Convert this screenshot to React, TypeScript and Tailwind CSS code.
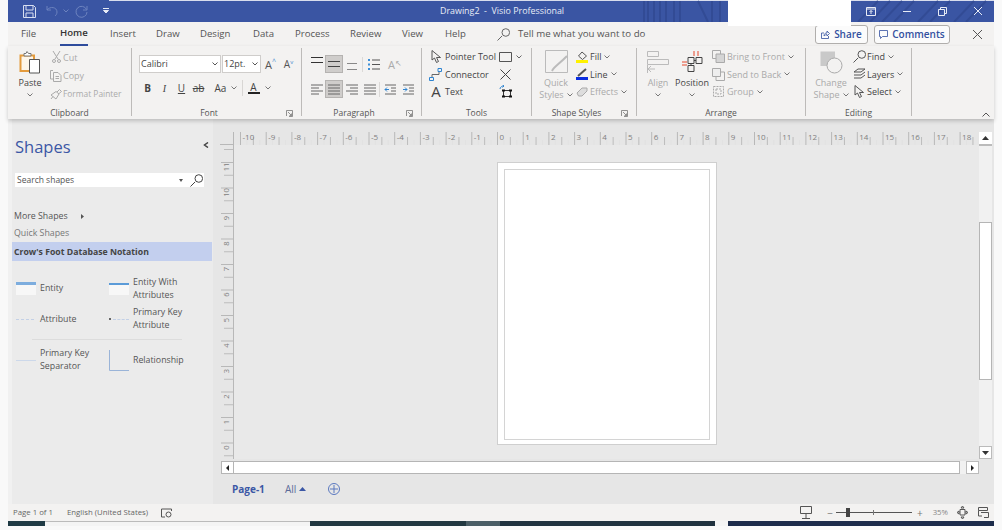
import React from "react";

type IP = { w: number; h: number; className?: string; children?: React.ReactNode };
const Ic = ({ w, h, className, children }: IP) => (
  <svg width={w} height={h} viewBox={`0 0 ${w} ${h}`} fill="none" stroke="currentColor" strokeWidth={1} className={"shrink-0 " + (className ?? "")}>
    {children}
  </svg>
);
const Chev = ({ className }: { className?: string }) => (
  <Ic w={6} h={4} className={className}>
    <path d="M.5.5 3 3 5.5.5" />
  </Ic>
);

const Group = ({ className, label, launcher, children }: { className: string; label: string; launcher?: boolean; children: React.ReactNode }) => (
  <div className={"h-[68px] shrink-0 border-r border-[#bdbbb9] flex flex-col " + className}>
    <div className="h-[58px] shrink-0 flex">{children}</div>
    <div className="h-[14px] shrink-0 flex items-center text-[8.5px] text-[#555]">
      <div className="flex-1 text-center">{label}</div>
      {launcher ? (
        <div className="w-[15px] flex justify-start text-[#777]">
          <Ic w={7} h={7}>
            <path d="M.5 6V.5H6.500V6.500H3M2 2 5.500 5.500M5.500 3.500V5.500H3.500" strokeWidth={0.8} />
          </Ic>
        </div>
      ) : null}
    </div>
  </div>
);

const Big = ({ className, icon, l1, l2, chev, dim }: { className: string; icon: React.ReactNode; l1: string; l2?: string; chev?: boolean; dim?: boolean }) => (
  <div className={"flex flex-col items-center shrink-0 text-[9px] " + className + (dim ? " text-[#aaa]" : " text-[#444]")}>
    <div className="h-[26px] mt-[2px] flex items-start justify-center">{icon}</div>
    <div className="h-[12.5px] flex items-center leading-none">{l1}</div>
    <div className="h-[12.5px] flex items-center gap-[3px] leading-none">
      {l2 ? <span>{l2}</span> : null}
      {chev ? <Chev className="text-[#777]" /> : null}
    </div>
  </div>
);

const Row = ({ icon, text, chev, dim, h, iw, gap }: { icon: React.ReactNode; text: string; chev?: boolean; dim?: boolean; h: string; iw: string; gap: string }) => (
  <div className={"flex items-center text-[9px] whitespace-nowrap " + h + (dim ? " text-[#aaa]" : " text-[#444]")}>
    <div className={"flex justify-center shrink-0 " + iw}>{icon}</div>
    <span className={gap}>{text}</span>
    {chev ? <Chev className="ml-[3px] text-[#777]" /> : null}
  </div>
);

const Cell = ({ className, on, children }: { className: string; on?: boolean; children: React.ReactNode }) => (
  <div className={"h-[18px] flex items-center justify-center shrink-0 " + className + (on ? " bg-[#cfcdcb] border border-[#b5b3b1]" : "")}>{children}</div>
);

const Lines = ({ kind }: { kind: "l" | "c" | "r" | "j" }) => {
  const d =
    kind === "l"
      ? "M1 2H13M1 5H9M1 8H13M1 11H9"
      : kind === "c"
      ? "M1 2H13M3 5H11M1 8H13M3 11H11"
      : kind === "r"
      ? "M1 2H13M5 5H13M1 8H13M5 11H13"
      : "M1 2H13M1 5H13M1 8H13M1 11H13";
  return (
    <Ic w={14} h={13} className="text-[#666]">
      <path d={d} />
    </Ic>
  );
};

const Ruler = () => {
  const U = 25.7;
  const nums = Array.from({ length: 29 }, (_, i) => i - 10);
  return (
    <svg width={745} height={13} className="block">
      {nums.map((n) => {
        const x = 263.5 + n * U;
        return (
          <g key={n}>
            <path d={`M${x} 0V13`} stroke="#b8b8b8" />
            <path d={`M${x + U / 2} 5V13`} stroke="#bcbcbc" />
            <path d={`M${x + U / 4} 8V13M${x + (3 * U) / 4} 8V13`} stroke="#e2e2e2" />
            <text x={x + 2} y={8} fontSize={8} fill="#808080" fontFamily="Open Sans, sans-serif">
              {n}
            </text>
          </g>
        );
      })}
    </svg>
  );
};

const VRuler = () => {
  const U = 25.5;
  const nums = Array.from({ length: 12 }, (_, i) => i);
  return (
    <svg width={14} height={314} className="block">
      <path d="M13.5 0V314" stroke="#b8b8b8" />
      <path d="M4 4.500H13" stroke="#bcbcbc" />
      {nums.map((n) => {
        const y = 298 - n * U;
        return (
          <g key={n}>
            <path d={`M1 ${y}H13`} stroke="#b8b8b8" />
            <path d={`M4 ${y + U / 2}H13`} stroke="#bcbcbc" />
            <text x={0} y={0} fontSize={7.5} textAnchor="middle" fill="#808080" fontFamily="Open Sans, sans-serif" transform={`translate(8.5 ${y + 4.5}) rotate(-90)`}>
              {n}
            </text>
          </g>
        );
      })}
    </svg>
  );
};

const ChipBtn = ({ className, icon, text }: { className: string; icon: React.ReactNode; text: string }) => (
  <div className={"h-[19px] bg-[#fbfbfb] border border-[#b0aeac] rounded-[3px] flex items-center justify-center gap-[4px] text-[10px] font-semibold text-[#33509f] " + className}>
    {icon}
    <span>{text}</span>
  </div>
);

const Stencil = ({ icon, l1, l2, h }: { icon: React.ReactNode; l1: string; l2?: string; h: string }) => (
  <div className={"flex items-center " + h}>
    <div className="w-[24px] flex shrink-0">{icon}</div>
    <div className="text-[8.8px] leading-[13px] text-[#555]">
      <div>{l1}</div>
      {l2 ? <div>{l2}</div> : null}
    </div>
  </div>
);

export default function App() {
  const tabs: [string, string][] = [
    ["File", "w-[39px]"],
    ["Home", "w-[50px]"],
    ["Insert", "w-[46px]"],
    ["Draw", "w-[44px]"],
    ["Design", "w-[53px]"],
    ["Data", "w-[42px]"],
    ["Process", "w-[55px]"],
    ["Review", "w-[52px]"],
    ["View", "w-[43px]"],
    ["Help", "w-[52px]"],
  ];
  const smallA = { h: "h-[17.5px]" };
  return (
    <div className="w-[1002px] h-[530px] bg-[#f9f9f9] overflow-hidden font-['Open_Sans',sans-serif] relative">
      <div className="absolute left-[728px] top-0 w-[123px] h-[26px] bg-white z-20" />
      <div className="ml-[8px] w-[986px] h-[526px] flex flex-col bg-[#f3f2f1]">
        {/* title bar */}
        <div className="h-[22px] shrink-0 bg-[#3a55a3] relative flex items-center text-[#e8ecf6]">
          <div className="absolute left-[101px] right-0 top-0 h-px bg-white/80" />
          <svg width={986} height={22} className="absolute left-0 top-0">
            <path d="M636 1V22M640 1V22M646 1V22M652 1V22M658 1V22M666 1V22M672 1V22M690 1 700 22M704 1V22M712 1V22" stroke="#324b95" strokeWidth={2} />
            <path d="M850 22 870 1M862 22 882 1M874 22 894 1M886 22 906 1M910 22 930 1M922 22 942 1M946 22 966 1M958 22 978 1" stroke="#324b95" strokeWidth={2} />
          </svg>
          <div className="w-[432px] shrink-0 flex items-center pl-[15px] relative">
            <Ic w={13} h={13} className="text-[#d8dff0]">
              <path d="M.5.5H10.500L12.500 2.500V12.500H.5ZM3 .5V5H10V.5M3 12.500V8H10V12.500" />
            </Ic>
            <Ic w={12} h={12} className="ml-[10px] text-[#6d83bf]">
              <path d="M1 1V5H5M1 5C4 1 11 2 11 7C11 9 10 10 9 11" />
            </Ic>
            <Chev className="ml-[5px] text-[#6d83bf]" />
            <Ic w={13} h={13} className="ml-[6px] text-[#6d83bf]">
              <path d="M12 1V5H8M11.500 4.500A5.500 5.500 0 1 0 12 7" />
            </Ic>
            <Ic w={6} h={6} className="ml-[15px] text-[#e8ecf6]">
              <path d="M0 .5H6M.5 2.500H5.500L3 5Z" fill="currentColor" />
            </Ic>
          </div>
          <div className="relative text-[8.9px] whitespace-pre">Drawing2  -  Visio Professional</div>
          <div className="flex-1" />
          <div className="relative flex items-center pr-[12px]">
            <Ic w={10} h={9} className="mr-[27px]">
              <path d="M.5.5H9.500V8.500H.5ZM.5 2H9.500" />
              <path d="M5 7V3.500M3.500 5 5 3.500 6.500 5" />
            </Ic>
            <Ic w={8} h={1} className="mr-[27px]">
              <path d="M0 .5H8" />
            </Ic>
            <Ic w={9} h={9} className="mr-[27px]">
              <path d="M.5 2.500H6.500V8.500H.5ZM2.500 2.500V.5H8.500V6.500H6.500" />
            </Ic>
            <Ic w={8} h={8}>
              <path d="M0 0 8 8M8 0 0 8" />
            </Ic>
          </div>
        </div>

        {/* tabs row */}
        <div className="h-[24px] shrink-0 flex items-center pl-[13px] text-[9.6px] text-[#555]">
          {tabs.map(([t, w]) => (
            <div key={t} className={"h-full flex items-center shrink-0 " + w}>
              <span className={t === "Home" ? "h-full flex items-center border-b-2 border-[#2f4d9f] text-[#333] font-semibold" : ""}>{t}</span>
            </div>
          ))}
          <Ic w={13} h={13} className="text-[#666] mr-[8px]">
            <path d="M.5 12.500 5 8M5 4.500a3.800 3.800 0 1 0 7.600 0a3.800 3.800 0 1 0-7.600 0" />
          </Ic>
          <span className="text-[9.7px] text-[#555] whitespace-nowrap">Tell me what you want to do</span>
          <div className="flex-1" />
          <ChipBtn
            className="w-[53px]"
            text="Share"
            icon={
              <Ic w={9} h={9} className="text-[#33509f]">
                <path d="M3 3H.5V8.500H7.500V6M3 6C3 4 4 3 6 3V1L8.500 3.500 6 6V4.500C5 4.500 4 5 3 6Z" strokeWidth={0.8} />
              </Ic>
            }
          />
          <ChipBtn
            className="w-[76px] ml-[6px]"
            text="Comments"
            icon={
              <Ic w={9} h={9} className="text-[#33509f]">
                <path d="M.5.5H8.500V6.500H3.500L1.500 8.500V6.500H.5Z" strokeWidth={0.8} />
              </Ic>
            }
          />
          <Ic w={9} h={9} className="ml-[23px] mr-[12px] text-[#555]">
            <path d="M0 0 9 9M9 0 0 9" />
          </Ic>
        </div>

        {/* ribbon */}
        <div className="h-[73px] shrink-0 flex pt-[2px] bg-[#f3f2f1] relative z-10 shadow-[0_2px_4px_rgba(0,0,0,0.2)]">
          <Group className="w-[124px]" label="Clipboard">
            <Big
              className="w-[34px] ml-[5px]"
              l1="Paste"
              chev
              icon={
                <Ic w={22} h={24} className="mt-[1px]">
                  <path d="M1.500 4.500H15V20H1.500Z" stroke="#e39b3e" strokeWidth={2} fill="#fdf6ea" />
                  <path d="M5 4V2.500H7L8 .5 9.500 2.500H12V5H5Z" stroke="#777" fill="#fff" />
                  <path d="M10.500 8.500H20.500V22H10.500Z" stroke="#555" fill="#fff" />
                </Ic>
              }
            />
            <div className="flex flex-col">
              <Row h="h-[18.5px]" iw="w-[14px] ml-[2px]" gap="" dim text="Cut" icon={<Ic w={9} h={12}><path d="M1 0 6 8M8 0 3 8" /><circle cx={2} cy={10} r={1.500} /><circle cx={7} cy={10} r={1.500} /></Ic>} />
              <Row h="h-[18.5px]" iw="w-[14px] ml-[2px]" gap="" dim text="Copy" icon={<Ic w={12} h={12}><path d="M3 .5H.5V9H3M3.500 2.500H8L11 5.500V11.500H3.500ZM5.500 6.500H9M5.500 8.500H9" /></Ic>} />
              <Row h="h-[18.5px]" iw="w-[14px] ml-[2px]" gap="text-[8.4px]" dim text="Format Painter" icon={<Ic w={12} h={11}><path d="M1 6 6 10 9 5 6 2.500ZM7 3 9.500.5 11.500 2.500 8.500 5M3 7.500 1 10" /></Ic>} />
            </div>
          </Group>

          <Group className="w-[170px]" label="Font" launcher>
            <div className="pl-[7px] pt-[7px] flex flex-col">
              <div className="flex items-center h-[18px]">
                <div className="w-[82px] h-[18px] bg-white border border-[#cfcdcb] flex items-center justify-between pl-[1px] pr-[2px] text-[9px] text-[#444]">
                  <span>Calibri</span>
                  <Chev className="text-[#555]" />
                </div>
                <div className="w-[39px] ml-[1px] h-[18px] bg-white border border-[#cfcdcb] flex items-center justify-between pl-[1px] pr-[2px] text-[9px] text-[#444]">
                  <span>12pt.</span>
                  <Chev className="text-[#555]" />
                </div>
                <div className="w-[19px] flex justify-center items-start text-[11px] text-[#555] leading-none">
                  A<span className="text-[7px] text-[#4a90d0] leading-[6px]">^</span>
                </div>
                <div className="w-[17px] flex justify-center items-start text-[10px] text-[#555] leading-none">
                  A<span className="text-[6px] text-[#4a90d0] leading-[6px]">v</span>
                </div>
              </div>
              <div className="flex items-center h-[18px] mt-[6px] text-[10px] text-[#444]">
                <Cell className="w-[17px] font-bold">B</Cell>
                <Cell className="w-[17px] italic font-['Liberation_Serif',serif]">I</Cell>
                <Cell className="w-[17px] underline">U</Cell>
                <Cell className="w-[17px] line-through">ab</Cell>
                <Cell className="w-[21px] ml-[3px]">Aa</Cell>
                <Chev className="text-[#777]" />
                <div className="w-px h-[16px] bg-[#d8d6d4] ml-[5px]" />
                <div className="w-[21px] flex flex-col items-center text-[10px] leading-[10px]">
                  <span>A</span>
                  <span className="w-[12px] h-[2px] bg-[#222]" />
                </div>
                <Chev className="ml-[1px] text-[#777]" />
              </div>
            </div>
          </Group>

          <Group className="w-[120px]" label="Paragraph" launcher>
            <div className="pl-[6px] pt-[7px] flex flex-col">
              <div className="flex items-center h-[18px]">
                <Cell className="w-[17px]"><Ic w={14} h={18} className="text-[#333]"><path d="M1 2.500H13M1 7.500H13" /></Ic></Cell>
                <Cell className="w-[18px]" on><Ic w={14} h={16} className="text-[#444]"><path d="M1 5.500H13M1 10.500H13" /></Ic></Cell>
                <Cell className="w-[18px]"><Ic w={12} h={18} className="text-[#888]"><path d="M1 8.500H11M1 14.500H11" /></Ic></Cell>
                <div className="w-px h-[15px] bg-[#dbd9d7] ml-[1px]" />
                <div className="w-[21px] flex justify-center">
                  <Ic w={13} h={13}>
                    <path d="M5 2H13M5 6.500H13M5 11H13" stroke="#555" />
                    <path d="M1 1H3V3H1ZM1 5.500H3V7.500H1ZM1 10H3V12H1Z" fill="#3c8fd8" stroke="none" />
                  </Ic>
                </div>
                <div className="w-[22px] flex justify-center items-start text-[11px] text-[#aaa] leading-none">
                  A<span className="text-[8px] leading-[7px]">↖</span>
                </div>
              </div>
              <div className="flex items-center h-[18px] mt-[7px]">
                <Cell className="w-[17px]"><Lines kind="l" /></Cell>
                <Cell className="w-[18px]" on><Lines kind="j" /></Cell>
                <Cell className="w-[18px]"><Lines kind="r" /></Cell>
                <Cell className="w-[18px]"><Lines kind="j" /></Cell>
                <div className="w-px h-[15px] bg-[#dbd9d7]" />
                <div className="w-[20px] flex justify-center">
                  <Ic w={13} h={11}>
                    <path d="M1 1H12M7 4H12M7 7H12M1 10H12" stroke="#666" />
                    <path d="M5 5.500H1M3 3.500 1 5.500 3 7.500" stroke="#2f84d0" />
                  </Ic>
                </div>
                <div className="w-[17px] flex justify-center">
                  <Ic w={13} h={11}>
                    <path d="M1 1H12M7 4H12M7 7H12M1 10H12" stroke="#666" />
                    <path d="M1 5.500H5M3 3.500 5 5.500 3 7.500" stroke="#2f84d0" />
                  </Ic>
                </div>
              </div>
            </div>
          </Group>

          <Group className="w-[110px]" label="Tools">
            <div className="w-[77px] flex flex-col">
              <Row {...smallA} iw="w-[14px] ml-[7px]" gap="ml-[2px]" text="Pointer Tool" icon={<Ic w={11} h={13} className="text-[#555]"><path d="M1 .5V10L3.500 8 5.500 12.500 7.500 11.500 5.500 7.500H9.500Z" /></Ic>} />
              <Row {...smallA} iw="w-[14px] ml-[7px]" gap="ml-[2px]" text="Connector" icon={<Ic w={14} h={13}><path d="M3 9.500V6.500H10V3.500" stroke="#666" /><path d="M.5 9.500H4.500V12.500H.5ZM9 .5H12.500V3.500H9Z" stroke="#2f84d0" /></Ic>} />
              <Row {...smallA} iw="w-[14px] ml-[7px]" gap="ml-[2px]" text="Text" icon={<span className="text-[15px] leading-none text-[#444]">A</span>} />
            </div>
            <div className="flex flex-col">
              <div className="h-[17.5px] flex items-center text-[#555]">
                <Ic w={13} h={10}><path d="M.5.5H12.500V9.500H.5Z" /></Ic>
                <Chev className="ml-[4px] text-[#666]" />
              </div>
              <div className="h-[17.5px] flex items-center">
                <Ic w={11} h={11} className="ml-[1px] text-[#444]"><path d="M.5.5 10.500 10.500M10.500.5.5 10.500" /></Ic>
              </div>
              <div className="h-[17.5px] flex items-center">
                <Ic w={13} h={13}>
                  <path d="M4.500 5.500H11.500V11.500H4.500Z" stroke="#333" />
                  <path d="M3 5.500H6M3 11.500H6M10 5.500H13M10 11.500H13" stroke="#111" strokeWidth={2} />
                  <path d="M1 4C1 2 3 1 5 1M3.500 0 5 1 3.500 2.500" stroke="#2f84d0" />
                </Ic>
              </div>
            </div>
          </Group>

          <Group className="w-[105px]" label="Shape Styles" launcher>
            <Big
              className="w-[40px] ml-[4px]"
              dim
              l1="Quick"
              l2="Styles"
              chev
              icon={
                <Ic w={23} h={23} className="text-[#bbb]">
                  <path d="M.5.5H22.500V22.500H.5Z" />
                  <path d="M7 21C9 17 13 15 22 6" strokeWidth={2} />
                </Ic>
              }
            />
            <div className="flex flex-col">
              <Row {...smallA} iw="w-[12px]" gap="ml-[2px]" chev text="Fill" icon={<div className="flex flex-col items-center"><Ic w={11} h={9} className="text-[#555]"><path d="M5 1 9.500 5 5.500 8.500 1.500 5Z" /></Ic><span className="w-[12px] h-[3px] bg-[#fff200]" /></div>} />
              <Row {...smallA} iw="w-[12px]" gap="ml-[2px]" chev text="Line" icon={<div className="flex flex-col items-center"><Ic w={11} h={9} className="text-[#555]"><path d="M1 8 9 1" strokeWidth={2} /></Ic><span className="w-[12px] h-[3px] bg-[#0a2ee0]" /></div>} />
              <Row {...smallA} dim iw="w-[12px]" gap="ml-[2px]" chev text="Effects" icon={<Ic w={12} h={10}><path d="M1 6 6 1H11V4L6 9H2.500Z" fill="#ddd" /></Ic>} />
            </div>
          </Group>

          <Group className="w-[169px]" label="Arrange">
            <Big
              className="w-[34px] ml-[4px]"
              dim
              l1="Align"
              chev
              icon={
                <Ic w={22} h={22} className="text-[#bbb] mt-[1px]">
                  <path d="M.5.5H11.500V5.500H.5ZM.5 8.500H21.500V13.500H.5ZM.5 14V22M8 18H1M4 15 1 18 4 21" />
                </Ic>
              }
            />
            <Big
              className="w-[34px]"
              l1="Position"
              chev
              icon={
                <Ic w={22} h={22} className="text-[#444] mt-[1px]">
                  <path d="M7 6.500H13V12.500H7ZM15 6.500H21V12.500H15ZM7 14.500H13V20.500H7ZM13 9.500H15M10 12.500V14.500" />
                  <path d="M13 0V5M17 0V5M1 11H6M1 14H6" stroke="#e6492d" />
                </Ic>
              }
            />
            <div className="flex flex-col">
              <Row {...smallA} dim iw="w-[13px] ml-[3px]" gap="ml-[2px]" chev text="Bring to Front" icon={<Ic w={13} h={13}><path d="M.5.5H8.500V8.500H.5Z" /><path d="M4 4H12.500V12.500H4Z" fill="#d5d5d5" /></Ic>} />
              <Row {...smallA} dim iw="w-[13px] ml-[3px]" gap="ml-[2px]" chev text="Send to Back" icon={<Ic w={13} h={13}><path d="M4 4H12.500V12.500H4Z" /><path d="M.5.5H8.500V8.500H.5Z" fill="#eee" /></Ic>} />
              <Row {...smallA} dim iw="w-[13px] ml-[3px]" gap="ml-[2px]" chev text="Group" icon={<Ic w={13} h={13}><path d="M1.500 1.500H11.500V11.500H1.500ZM4 4H9V9H4Z" strokeDasharray="2 1" /></Ic>} />
            </div>
          </Group>

          <Group className="w-[106px]" label="Editing">
            <Big
              className="w-[42px] ml-[4px]"
              dim
              l1="Change"
              l2="Shape"
              chev
              icon={
                <Ic w={23} h={23} className="text-[#aaa] mt-[1px]">
                  <path d="M.5.5H15V15H.5Z" fill="#c9c9c9" stroke="none" />
                  <circle cx={14.500} cy={14.500} r={7.500} fill="#f3f2f1" />
                </Ic>
              }
            />
            <div className="flex flex-col">
              <Row {...smallA} iw="w-[13px] ml-[1px]" gap="ml-[1px]" chev text="Find" icon={<Ic w={13} h={13} className="text-[#555]"><path d="M.5 12.500 5 8M5 4.500a3.800 3.800 0 1 0 7.600 0a3.800 3.800 0 1 0-7.600 0" /></Ic>} />
              <Row {...smallA} iw="w-[13px] ml-[1px]" gap="ml-[1px]" chev text="Layers" icon={<Ic w={13} h={12} className="text-[#555]"><path d="M1 4 5 1H12L8 4ZM1 7H8L12 4M1 10H8L12 7" /></Ic>} />
              <Row {...smallA} iw="w-[13px] ml-[1px]" gap="ml-[1px]" chev text="Select" icon={<Ic w={11} h={13} className="text-[#555]"><path d="M1 .5V10L3.500 8 5.500 12.500 7.500 11.500 5.500 7.500H9.500Z" /></Ic>} />
            </div>
          </Group>

          <div className="flex-1 flex items-end justify-end pr-[4px] pb-[2px]">
            <Ic w={8} h={5} className="text-[#555]">
              <path d="M.5 4.500 4 1 7.500 4.500" />
            </Ic>
          </div>
        </div>

        {/* body */}
        <div className="flex-1 flex min-h-0">
          <div className="w-[4px] shrink-0 bg-[#f1f1f1]" />
          {/* shapes panel */}
          <div className="w-[201px] shrink-0 bg-[#ebebeb] flex flex-col pt-[16px]">
            <div className="flex items-center justify-between pl-[3px] pr-[4px] h-[24px]">
              <span className="text-[16.5px] leading-none text-[#3b57a5]">Shapes</span>
              <Ic w={6} h={6} className="text-[#444] mb-[4px]">
                <path d="M5 .5 1.500 3 5 5.500" strokeWidth={1.500} />
              </Ic>
            </div>
            <div className="ml-[3px] mt-[14px] w-[189px] h-[14px] bg-white flex items-center pl-[2px] pr-[1px] text-[8.5px] text-[#555]">
              <span className="flex-1">Search shapes</span>
              <Ic w={4} h={3} className="text-[#555] mr-[7px]">
                <path d="M0 0H4L2 3Z" fill="currentColor" stroke="none" />
              </Ic>
              <Ic w={13} h={13} className="text-[#444]">
                <path d="M.5 12.500 5 8M5 4.500a3.800 3.800 0 1 0 7.600 0a3.800 3.800 0 1 0-7.600 0" />
              </Ic>
            </div>
            <div className="h-[17px] mt-[21px] pl-[2px] flex items-center text-[8.8px] text-[#555]">
              <span className="w-[67px]">More Shapes</span>
              <Ic w={3} h={5} className="text-[#555]">
                <path d="M0 0V5L3 2.500Z" fill="currentColor" stroke="none" />
              </Ic>
            </div>
            <div className="h-[17px] pl-[2px] flex items-center text-[8.8px] text-[#777]">Quick Shapes</div>
            <div className="h-[19px] w-[200px] bg-[#c3cfee] pl-[2px] pt-[2px] flex items-center text-[8.7px] font-bold text-[#444]">Crow's Foot Database Notation</div>
            <div className="mt-[15px] pl-[4px] grid grid-cols-[93px_93px]">
              <Stencil
                h="h-[25px]"
                l1="Entity"
                icon={
                  <div className="w-[20px] h-[13px] bg-[#f7f7f7] border-t-[3px] border-[#7dadde]" />
                }
              />
              <Stencil
                h="h-[25px]"
                l1="Entity With"
                l2="Attributes"
                icon={
                  <div className="w-[20px] h-[12px] bg-[#f7f7f7] border-t-2 border-[#5b9bd8]" />
                }
              />
              <div className="h-[5px] col-span-2" />
              <Stencil h="h-[26px]" l1="Attribute" icon={<div className="w-[18px] border-t border-dashed border-[#c3d0e6]" />} />
              <Stencil
                h="h-[26px]"
                l1="Primary Key"
                l2="Attribute"
                icon={
                  <div className="w-[20px] flex items-center gap-[2px]">
                    <span className="w-[2px] h-[2px] bg-[#666]" />
                    <span className="flex-1 border-t border-dashed border-[#c3d0e6]" />
                  </div>
                }
              />
              <div className="col-span-2 h-[15px] flex items-center pl-[16px]">
                <div className="w-[150px] h-px bg-[#dcdcdc]" />
              </div>
              <Stencil h="h-[26px]" l1="Primary Key" l2="Separator" icon={<div className="w-[20px] h-px bg-[#ccd8ea]" />} />
              <Stencil
                h="h-[26px]"
                l1="Relationship"
                icon={
                  <Ic w={21} h={21} className="text-[#9ab4d8]">
                    <path d="M.5 0V20.500H20" />
                  </Ic>
                }
              />
            </div>
          </div>

          {/* drawing area */}
          <div className="flex-1 bg-[#e6e6e6] flex flex-col pl-[7px] pt-[13px] min-w-0">
            <div className="h-[327px] flex">
              <div className="w-[759px] grid grid-cols-[14px_745px] grid-rows-[13px_314px]">
                <div className="border-b border-r border-[#b8b8b8]" />
                <div className="border-b border-[#b8b8b8] h-[14px]">
                  <Ruler />
                </div>
                <VRuler />
                <div className="bg-[#e9e9e9] pl-[263px] pt-[17px]">
                  <div className="w-[220px] h-[283px] bg-white border border-[#cfcfcf] p-[6px] pb-[4px]">
                    <div className="w-full h-full border border-[#d4d4d4]" />
                  </div>
                </div>
              </div>
              <div className="w-[13px] flex flex-col bg-[#f1f1f1]">
                <div className="h-[14px] bg-white border-b-2 border-[#bbb] flex items-center justify-center">
                  <Ic w={7} h={4} className="text-[#333]"><path d="M0 4H7L3.500 0Z" fill="currentColor" stroke="none" /></Ic>
                </div>
                <div className="h-[76px]" />
                <div className="h-[158px] bg-white border border-[#b5b5b5]" />
                <div className="flex-1" />
                <div className="h-[13px] bg-white border border-[#bbb] flex items-center justify-center">
                  <Ic w={7} h={4} className="text-[#333]"><path d="M0 0H7L3.500 4Z" fill="currentColor" stroke="none" /></Ic>
                </div>
              </div>
            </div>
            <div className="mt-[2px] ml-[1px] w-[758px] h-[13px] flex items-stretch">
              <div className="w-[13px] bg-white border border-[#b5b5b5] flex items-center justify-center">
                <Ic w={3} h={6} className="text-[#222]"><path d="M3 0V6L0 3Z" fill="currentColor" stroke="none" /></Ic>
              </div>
              <div className="w-[726px] bg-white border-y border-r border-[#b5b5b5]" />
              <div className="w-[6px] bg-[#f1f1f1]" />
              <div className="flex-1 bg-white border border-[#bbb] flex items-center justify-center">
                <Ic w={3} h={6} className="text-[#222]"><path d="M0 0V6L3 3Z" fill="currentColor" stroke="none" /></Ic>
              </div>
            </div>
            <div className="h-[30px] flex items-center pl-[12px] text-[10px]">
              <span className="w-[53px] font-bold text-[#3b57a5]">Page-1</span>
              <span className="text-[#5a6b99]">All</span>
              <Ic w={7} h={4} className="ml-[3px] text-[#3b57a5]"><path d="M0 4H7L3.500 0Z" fill="currentColor" stroke="none" /></Ic>
              <Ic w={12} h={12} className="ml-[22px] text-[#5a78bf]">
                <circle cx={6} cy={6} r={5.500} />
                <path d="M6 2V10M2 6H10" />
              </Ic>
            </div>
          </div>
        </div>

        {/* status bar */}
        <div className="h-[17px] shrink-0 bg-[#f3f2f1] flex items-center text-[7.8px] text-[#666] pl-[5px] whitespace-nowrap">
          <span className="w-[54px] pt-[1px]">Page 1 of 1</span>
          <span className="w-[94px] pt-[1px]">English (United States)</span>
          <Ic w={11} h={10} className="text-[#555]">
            <path d="M.5 1H10.500V3M.5 1V9H4" />
            <circle cx={7.500} cy={6.500} r={2.500} />
          </Ic>
          <div className="flex-1" />
          <Ic w={12} h={13} className="text-[#555] mr-[15px]">
            <path d="M.5.5H11.500V7.500H.5ZM6 8V12M2 12.500H10" />
          </Ic>
          <span className="text-[#777] text-[10px] leading-none mr-[3px]">−</span>
          <div className="w-[76px] h-[9px] relative flex items-center">
            <div className="w-full h-px bg-[#555]" />
            <div className="absolute left-[10px] top-0 w-[4px] h-[9px] bg-[#444]" />
            <div className="absolute left-[37px] top-[2px] w-px h-[5px] bg-[#777]" />
          </div>
          <span className="text-[#777] text-[10px] leading-none ml-[5px] mr-[10px]">+</span>
          <span className="text-[#888] mr-[9px] pt-[1px]">35%</span>
          <Ic w={11} h={13} className="text-[#555] mr-[10px]">
            <path d="M3 3.500H8V9H3ZM5.500 0 4 2H7ZM5.500 13 4 11H7ZM0 6.500 2 5V8ZM11 6.500 9 5V8Z" />
          </Ic>
          <Ic w={11} h={12} className="text-[#555] mr-[5px]">
            <path d="M.5.5H9.500V3.500H.5ZM.5 3.500V9H4M3 5.500H10.500V10.500H6" />
          </Ic>
        </div>

        {/* strip below the window */}
        <div className="h-[5px] shrink-0 flex">
          <div className="w-[37px] bg-[#1f3a44]" />
          <div className="w-[265px] bg-[#f4f4f4] border-t border-[#bbb]" />
          <div className="w-[156px] bg-[#213740]" />
          <div className="w-[34px] bg-[#4a5d65]" />
          <div className="w-[215px] bg-[#20323f]" />
          <div className="w-[13px] bg-[#f4f4f4]" />
          <div className="flex-1 bg-[#1c2b4a]" />
        </div>
      </div>
    </div>
  );
}
